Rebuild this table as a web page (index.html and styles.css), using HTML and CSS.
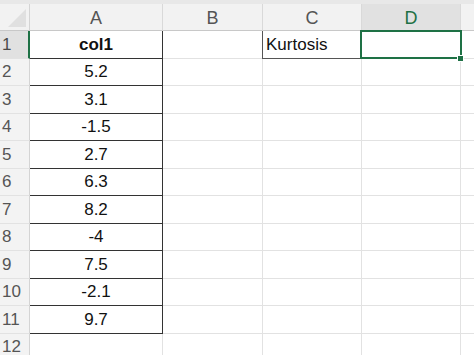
FILE: index.html
```html
<!DOCTYPE html>
<html>
<head>
<meta charset="utf-8">
<link rel="stylesheet" href="styles.css">
</head>
<body>
<div class="topband"></div>
<div class="sheet">
  <div class="corner"><span class="tri"></span></div>
  <div class="colhead">A</div>
  <div class="colhead">B</div>
  <div class="colhead">C</div>
  <div class="colhead sel">D</div>
  <div class="colhead edge"></div>

  <div class="rowhead sel">1</div>
  <div class="cell a bold">col1</div>
  <div class="cell"></div>
  <div class="cell c1">Kurtosis</div>
  <div class="cell d1"><span class="selbox"></span><span class="handle"></span></div>
  <div class="cell edge"></div>

  <div class="rowhead">2</div><div class="cell a">5.2</div><div class="cell"></div><div class="cell"></div><div class="cell"></div><div class="cell edge"></div>
  <div class="rowhead">3</div><div class="cell a">3.1</div><div class="cell"></div><div class="cell"></div><div class="cell"></div><div class="cell edge"></div>
  <div class="rowhead">4</div><div class="cell a">-1.5</div><div class="cell"></div><div class="cell"></div><div class="cell"></div><div class="cell edge"></div>
  <div class="rowhead">5</div><div class="cell a">2.7</div><div class="cell"></div><div class="cell"></div><div class="cell"></div><div class="cell edge"></div>
  <div class="rowhead">6</div><div class="cell a">6.3</div><div class="cell"></div><div class="cell"></div><div class="cell"></div><div class="cell edge"></div>
  <div class="rowhead">7</div><div class="cell a">8.2</div><div class="cell"></div><div class="cell"></div><div class="cell"></div><div class="cell edge"></div>
  <div class="rowhead">8</div><div class="cell a">-4</div><div class="cell"></div><div class="cell"></div><div class="cell"></div><div class="cell edge"></div>
  <div class="rowhead">9</div><div class="cell a">7.5</div><div class="cell"></div><div class="cell"></div><div class="cell"></div><div class="cell edge"></div>
  <div class="rowhead">10</div><div class="cell a">-2.1</div><div class="cell"></div><div class="cell"></div><div class="cell"></div><div class="cell edge"></div>
  <div class="rowhead">11</div><div class="cell a">9.7</div><div class="cell"></div><div class="cell"></div><div class="cell"></div><div class="cell edge"></div>
  <div class="rowhead">12</div><div class="cell"></div><div class="cell"></div><div class="cell"></div><div class="cell"></div><div class="cell edge"></div>
</div>
</body>
</html>
```
FILE: styles.css
```css
html, body {
  margin: 0;
  padding: 0;
  background: #ffffff;
  overflow: hidden;
}
body {
  width: 474px;
  height: 355px;
  font-family: "Liberation Sans", Arial, sans-serif;
  color: #111;
}
.topband {
  height: 4px;
  background: #e8e8e8;
}
.sheet {
  display: grid;
  grid-template-columns: 30px 133px 100px 99px 99px 1fr;
  grid-template-rows: 27px repeat(12, 27.5px);
}
.sheet > div {
  box-sizing: border-box;
  position: relative;
}
.corner {
  background: #f2f2f2;
  border-right: 1px solid #d4d4d4;
  border-bottom: 1px solid #c8c8c8;
}
.tri {
  position: absolute;
  right: 3px;
  bottom: 3px;
  width: 0;
  height: 0;
  border-left: 18px solid transparent;
  border-bottom: 18px solid #e0e0e0;
}
.colhead {
  background: #f2f2f2;
  border-right: 1px solid #d9d9d9;
  border-bottom: 1px solid #c8c8c8;
  color: #555;
  font-size: 18px;
  display: flex;
  align-items: center;
  justify-content: center;
  padding-top: 2px;
}
.colhead.sel {
  background: #e1e1e1;
  color: #1e7145;
}
.colhead.edge {
  border-right: none;
}
.rowhead {
  background: #f3f3f3;
  border-right: 1px solid #d4d4d4;
  border-bottom: 1px solid #e2e2e2;
  color: #555;
  font-size: 17px;
  display: flex;
  align-items: center;
  padding-left: 2px;
  padding-top: 1px;
}
.rowhead.sel {
  background: #e1e1e1;
  color: #4a4a4a;
  border-right: 2px solid #1e7145;
}
.cell {
  border-right: 1px solid #e2e2e2;
  border-bottom: 1px solid #e2e2e2;
  font-size: 17px;
  display: flex;
  align-items: center;
  padding-top: 1px;
}
.cell.edge {
  border-right: none;
}
.cell.a {
  justify-content: center;
  border-right: 1px solid #333;
  border-bottom: 1px solid #333;
}
.cell.bold {
  font-weight: bold;
}
.cell.c1 {
  border-left: 1px solid #555;
  border-bottom: 1px solid #555;
  padding-left: 3px;
  margin-left: -1px;
}
.selbox {
  position: absolute;
  left: -2px;
  top: -1px;
  right: -2px;
  bottom: -1px;
  border: 2px solid #1e7145;
}
.handle {
  position: absolute;
  right: -4px;
  bottom: -4px;
  width: 5px;
  height: 5px;
  background: #1e7145;
  border: 1px solid #fff;
  z-index: 2;
}
```
